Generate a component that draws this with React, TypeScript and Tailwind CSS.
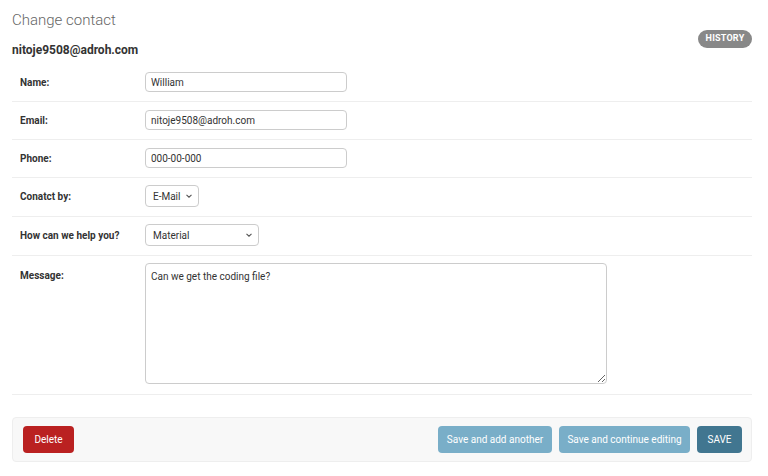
import React from 'react';

const font = { fontFamily: 'Roboto, "Liberation Sans", sans-serif' };

function Chevron() {
  return (
    <svg width="8" height="8" viewBox="0 0 8 8" className="text-[#555]">
      <path d="M1.5 2.8 L4 5.2 L6.5 2.8" fill="none" stroke="currentColor" strokeWidth="1.1" />
    </svg>
  );
}

function Row({ label, children, pad = 'pt-2 pb-[9px]', labelH = 'h-5' }: { label: string; children: React.ReactNode; pad?: string; labelH?: string }) {
  return (
    <div className={`flex items-start border-b border-[#eee] ${pad}`}>
      <div className={`w-[133px] shrink-0 pl-2 flex items-center ${labelH} text-[10px] font-bold text-[#333]`}>{label}</div>
      {children}
    </div>
  );
}

function TextInput({ value }: { value: string }) {
  return (
    <input
      defaultValue={value}
      className="block w-[202px] h-5 border border-[#ccc] rounded-[4px] px-[5px] text-[10px] text-[#333] outline-none"
      style={font}
    />
  );
}

function Select({ value, width }: { value: string; width: string }) {
  return (
    <div className={`${width} h-[22px] border border-[#ccc] rounded-[4px] flex items-center justify-between pl-[7px] pr-[5px] text-[10px] text-[#333]`}>
      <span>{value}</span>
      <Chevron />
    </div>
  );
}

export default function App() {
  return (
    <div className="bg-white min-h-screen pl-3 pr-4 pt-[10px]" style={font}>
      <h1 className="text-[15px] leading-5 font-light text-[#666]">Change contact</h1>
      <div className="flex items-start justify-between">
        <h2 className="mt-3 text-[12px] leading-4 font-bold text-[#333]">nitoje9508@adroh.com</h2>
        <span className="w-[54px] h-[18px] rounded-full bg-[#888] text-white text-[9px] font-bold tracking-wide flex items-center justify-center">
          HISTORY
        </span>
      </div>

      <div className="mt-[6px]">
        <Row label="Name:">
          <TextInput value="William" />
        </Row>
        <Row label="Email:">
          <TextInput value="nitoje9508@adroh.com" />
        </Row>
        <Row label="Phone:">
          <TextInput value="000-00-000" />
        </Row>
        <Row label="Conatct by:" pad="pt-[7px] pb-[9px]" labelH="h-[22px]">
          <Select value="E-Mail" width="w-[54px]" />
        </Row>
        <Row label="How can we help you?" pad="pt-[7px] pb-[9px]" labelH="h-[22px]">
          <Select value="Material" width="w-[114px]" />
        </Row>
        <Row label="Message:" pad="pt-[7px] pb-[10px]" labelH="h-6">
          <textarea
            defaultValue="Can we get the coding file?"
            className="block w-[462px] h-[121px] border border-[#ccc] rounded-[4px] px-[5px] py-[5px] text-[10px] text-[#333] outline-none"
            style={font}
          />
        </Row>
      </div>

      <div className="mt-[22px] h-[45px] bg-[#f8f8f8] border border-[#eee] rounded-[4px] flex items-center justify-between pl-[10px] pr-[9px]">
        <button className="w-[51px] h-[27px] rounded-[4px] bg-[#ba2121] text-white text-[10px]">Delete</button>
        <div className="flex items-center gap-[7px]">
          <button className="w-[114px] h-[27px] rounded-[4px] bg-[#79aec8] text-white text-[10px]">Save and add another</button>
          <button className="w-[131px] h-[27px] rounded-[4px] bg-[#79aec8] text-white text-[10px]">Save and continue editing</button>
          <button className="w-[45px] h-[27px] rounded-[4px] bg-[#417690] text-white text-[10px]">SAVE</button>
        </div>
      </div>
    </div>
  );
}
